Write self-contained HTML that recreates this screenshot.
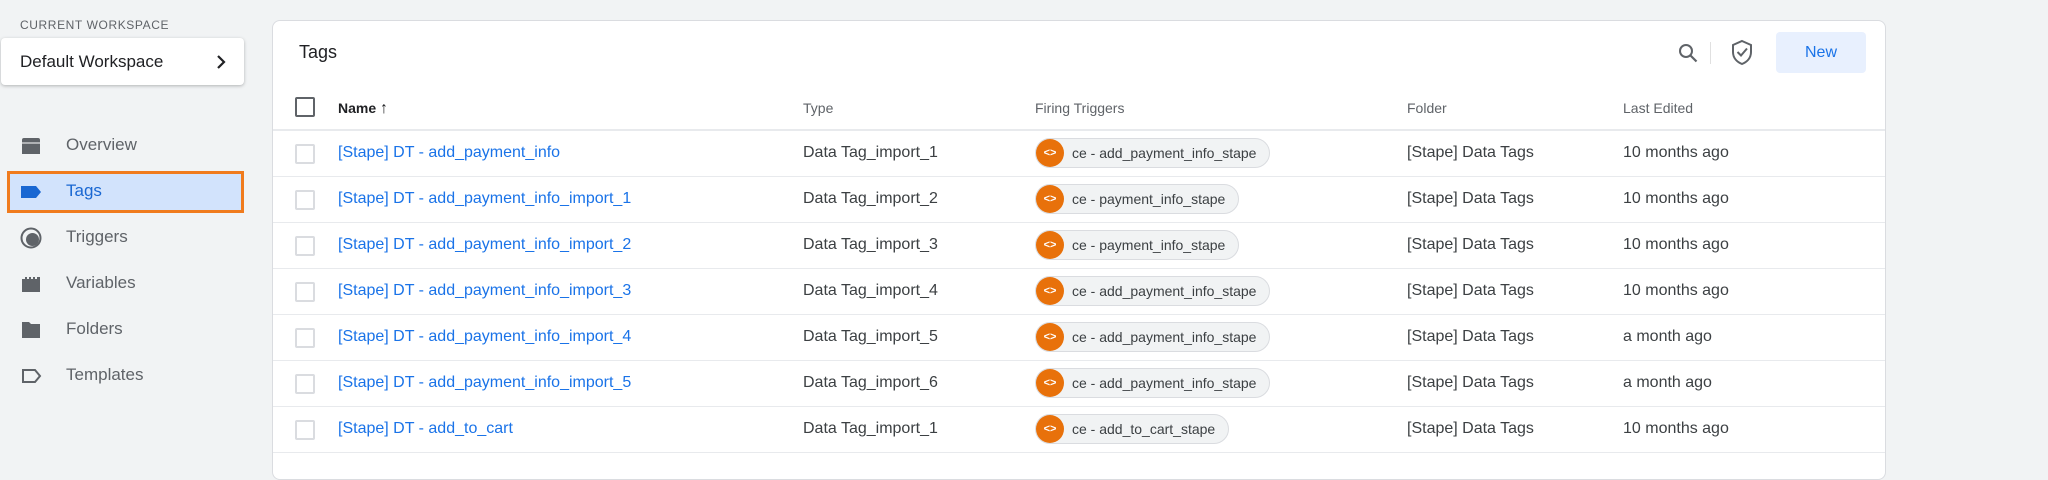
<!DOCTYPE html>
<html><head><meta charset="utf-8"><style>
*{box-sizing:border-box;margin:0;padding:0}
body{width:2048px;height:454px;overflow:hidden;background:#f1f3f4;font-family:"Liberation Sans",Arial,sans-serif;position:relative;color:#202124}
.abs{position:absolute}
.cw{left:20px;top:18px;font-size:12px;letter-spacing:.6px;color:#5f6368}
.ws{left:1px;top:38px;width:243px;height:47px;background:#fff;border-radius:4px;box-shadow:0 1px 3px rgba(60,64,67,.35);font-size:17px;padding:14px 19px;color:#202124}
.nav{left:0;width:250px;height:46px;font-size:17px;color:#5f6368}
.nav span{position:absolute;left:66px;top:13px}
.nav svg{position:absolute;left:19px;top:12px}
.sel{left:7px;top:171px;width:237px;height:42px;border:3px solid #f07b1d;background:#d2e3fc}
.card{left:272px;top:20px;width:1614px;height:460px;background:#fff;border:1px solid #dadce0;border-radius:8px}
.title{left:299px;top:42px;font-size:18px;color:#202124}
.new{left:1776px;top:32px;width:90px;height:41px;background:#e8f0fe;border-radius:4px;color:#1a73e8;font-size:16px;text-align:center;line-height:41px}
.th{top:100px;font-size:14px;color:#5f6368}
.line{left:273px;width:1612px;height:1px;background:#e8eaed}
.cb{left:295px;width:20px;height:20px;border:2px solid #dadce0;border-radius:2px}
.td{font-size:16px;color:#3c4043}
.lnk{color:#1a73e8}
.chip{left:1035px;height:30px;border:1px solid #dadce0;background:#f1f3f4;border-radius:15px;font-size:14px;color:#3c4043;padding-left:36px;padding-right:13px;line-height:28px;white-space:nowrap}
.chip i{position:absolute;left:0;top:0;width:28px;height:28px;border-radius:50%;background:#e8710a;color:#fff;font-style:normal;font-size:11px;text-align:center;line-height:28px;font-weight:bold}
</style></head><body>
<div class="abs cw">CURRENT WORKSPACE</div>
<div class="abs ws">Default Workspace<svg class="abs" style="left:214px;top:16px" width="12" height="16" viewBox="0 0 12 16"><path d="M3 2l6 6-6 6" fill="none" stroke="#202124" stroke-width="2.2"/></svg></div>

<div class="abs sel"></div>
<div class="abs nav" style="top:122px"><svg width="24" height="24" viewBox="0 0 24 24"><path d="M3 6q0-2 2-2h14q2 0 2 2v14H3z" fill="#5f6368"/><path d="M3 9h18" stroke="#fff" stroke-width="1"/></svg><span>Overview</span></div>
<div class="abs nav" style="top:168px"><svg width="24" height="24" viewBox="0 0 24 24"><path d="M2 6h15l5 6-5 6H2z" fill="#1967d2"/></svg><span style="color:#1967d2">Tags</span></div>
<div class="abs nav" style="top:214px"><svg width="24" height="24" viewBox="0 0 24 24"><circle cx="12" cy="12" r="9.5" fill="none" stroke="#5f6368" stroke-width="2"/><circle cx="13.5" cy="13.5" r="6.5" fill="#5f6368"/></svg><span>Triggers</span></div>
<div class="abs nav" style="top:260px"><svg width="24" height="24" viewBox="0 0 24 24"><path d="M3 7h3v-2h2v2h2v-2h2v2h2v-2h2v2h2v-2h3v15H3z" fill="#5f6368"/></svg><span>Variables</span></div>
<div class="abs nav" style="top:306px"><svg width="24" height="24" viewBox="0 0 24 24"><path d="M3 4h7l2 2h9v14H3z" fill="#5f6368"/></svg><span>Folders</span></div>
<div class="abs nav" style="top:352px"><svg width="24" height="24" viewBox="0 0 24 24"><path d="M4 6h12l5 6-5 6H4z" fill="none" stroke="#5f6368" stroke-width="2"/></svg><span>Templates</span></div>

<div class="abs card"></div>
<div class="abs title">Tags</div>
<svg class="abs" style="left:1676px;top:41px" width="24" height="24" viewBox="0 0 24 24"><circle cx="10" cy="10" r="6" fill="none" stroke="#5f6368" stroke-width="2"/><path d="M14.5 14.5l6 6" stroke="#5f6368" stroke-width="2.2"/></svg>
<div class="abs" style="left:1710px;top:42px;width:1px;height:22px;background:#e0e0e0"></div>
<svg class="abs" style="left:1730px;top:39px" width="24" height="28" viewBox="0 0 24 28"><path d="M12 2l9 4v7c0 6-4 10-9 12-5-2-9-6-9-12V6z" fill="none" stroke="#5f6368" stroke-width="2"/><path d="M7.5 13l3.5 3.5 6-7" fill="none" stroke="#5f6368" stroke-width="2"/></svg>
<div class="abs new">New</div>

<div class="abs cb" style="top:97px;border-color:#5f6368"></div>
<div class="abs th" style="left:338px;color:#202124;font-weight:bold">Name <span style="font-weight:normal;font-size:16px">&#8593;</span></div>
<div class="abs th" style="left:803px">Type</div>
<div class="abs th" style="left:1035px">Firing Triggers</div>
<div class="abs th" style="left:1407px">Folder</div>
<div class="abs th" style="left:1623px">Last Edited</div>
<div class="abs line" style="top:129px;height:2px"></div>

<div id="rows"></div>
<script>
var d=[["[Stape] DT - add_payment_info","Data Tag_import_1","ce - add_payment_info_stape","10 months ago"],
["[Stape] DT - add_payment_info_import_1","Data Tag_import_2","ce - payment_info_stape","10 months ago"],
["[Stape] DT - add_payment_info_import_2","Data Tag_import_3","ce - payment_info_stape","10 months ago"],
["[Stape] DT - add_payment_info_import_3","Data Tag_import_4","ce - add_payment_info_stape","10 months ago"],
["[Stape] DT - add_payment_info_import_4","Data Tag_import_5","ce - add_payment_info_stape","a month ago"],
["[Stape] DT - add_payment_info_import_5","Data Tag_import_6","ce - add_payment_info_stape","a month ago"],
["[Stape] DT - add_to_cart","Data Tag_import_1","ce - add_to_cart_stape","10 months ago"]];
var h="";
d.forEach(function(r,i){var t=131+i*46;
h+='<div class="abs cb" style="top:'+(t+13)+'px"></div>'+
'<div class="abs td lnk" style="left:338px;top:'+(t+13)+'px">'+r[0]+'</div>'+
'<div class="abs td" style="left:803px;top:'+(t+13)+'px">'+r[1]+'</div>'+
'<div class="abs chip" style="top:'+(t+7)+'px"><i>&lt;&gt;</i>'+r[2]+'</div>'+
'<div class="abs td" style="left:1407px;top:'+(t+13)+'px">[Stape] Data Tags</div>'+
'<div class="abs td" style="left:1623px;top:'+(t+13)+'px">'+r[3]+'</div>'+
'<div class="abs line" style="top:'+(t+45)+'px"></div>';});
document.getElementById("rows").innerHTML=h;
</script>
</body></html>
